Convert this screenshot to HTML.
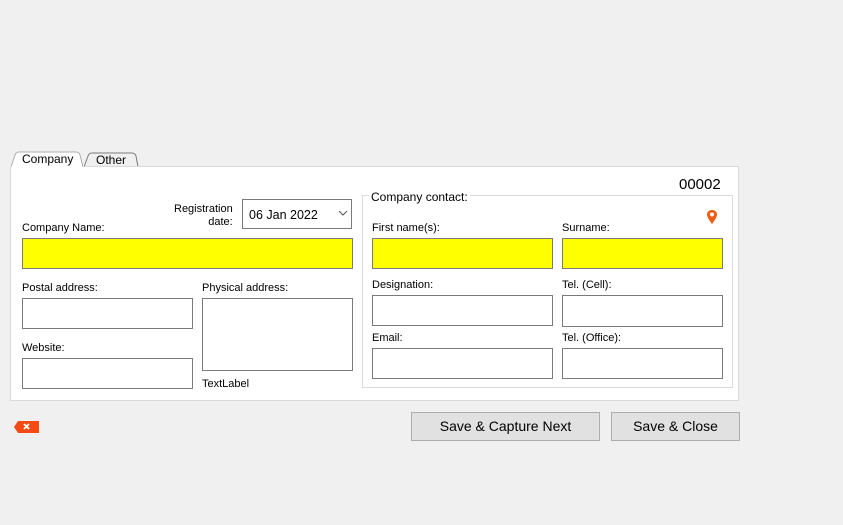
<!DOCTYPE html>
<html><head><meta charset="utf-8"><style>
body{margin:0;width:843px;height:525px;background:#f0f0f0;font-family:"Liberation Sans",sans-serif;color:#000;position:relative;overflow:hidden}
.a{position:absolute}
.l{position:absolute;font-size:11px;white-space:nowrap;margin-top:1px}
.i{position:absolute;background:#fff;border:1px solid #7a7a7a;box-sizing:border-box}
.y{background:#ffff00}
.b{position:absolute;background:#e1e1e1;border:1px solid #adadad;box-sizing:border-box;font-size:14px;text-align:center;line-height:26px}
</style></head><body>
<svg class="a" style="left:0;top:0" width="843" height="525">
<path d="M11 167 L15 155 Q16 152 19 152 L76 152 Q79 152 80 155 L83 167" fill="#fff" stroke="#adadad"/>
<path d="M84 167 L88 156 Q89 153 92 153 L132 153 Q135 153 136 156 L138 167" fill="#f0f0f0" stroke="#7a7a7a"/>
</svg>
<div class="a" style="left:10px;top:166px;width:729px;height:235px;background:#fff;border:1px solid #d9d9d9;box-sizing:border-box"></div>
<div class="a" style="left:12px;top:165px;width:70px;height:3px;background:#fff"></div>
<div class="a" style="left:22px;top:152px;font-size:12px">Company</div>
<div class="a" style="left:96px;top:153px;font-size:12px">Other</div>
<div class="a" style="left:679px;top:176px;font-size:15px">00002</div>
<div class="l" style="left:174px;top:202px;text-align:right;line-height:13px">Registration<br><span style="padding-left:19px">date:</span></div>
<div class="i" style="left:242px;top:199px;width:110px;height:30px;font-size:12.5px;padding:8px 0 0 6px">06 Jan 2022</div>
<svg class="a" style="left:338px;top:210px" width="10" height="6"><path d="M1 1 L5 5 L9 1" fill="none" stroke="#555"/></svg>
<div class="l" style="left:22px;top:221px">Company Name:</div>
<div class="i y" style="left:22px;top:238px;width:331px;height:31px"></div>
<div class="l" style="left:22px;top:281px">Postal address:</div>
<div class="i" style="left:22px;top:298px;width:171px;height:31px"></div>
<div class="l" style="left:202px;top:281px">Physical address:</div>
<div class="i" style="left:202px;top:298px;width:151px;height:73px"></div>
<div class="l" style="left:22px;top:341px">Website:</div>
<div class="i" style="left:22px;top:358px;width:171px;height:31px"></div>
<div class="l" style="left:202px;top:377px">TextLabel</div>
<div class="a" style="left:362px;top:195px;width:371px;height:193px;border:1px solid #dcdcdc;box-sizing:border-box"></div>
<div class="l" style="left:369px;top:189px;background:#fff;padding:0 2px;font-size:12px">Company contact:</div>
<svg class="a" style="left:706px;top:209px" width="12" height="17"><path d="M6 1 C2.5 1 1 3.5 1 5.5 C1 8.5 6 15 6 15 C6 15 11 8.5 11 5.5 C11 3.5 9.5 1 6 1 Z" fill="#f55a13"/><circle cx="6" cy="5.5" r="2" fill="#fff"/></svg>
<div class="l" style="left:372px;top:221px">First name(s):</div>
<div class="i y" style="left:372px;top:238px;width:181px;height:31px"></div>
<div class="l" style="left:562px;top:221px">Surname:</div>
<div class="i y" style="left:562px;top:238px;width:161px;height:31px"></div>
<div class="l" style="left:372px;top:278px">Designation:</div>
<div class="i" style="left:372px;top:295px;width:181px;height:31px"></div>
<div class="l" style="left:562px;top:278px">Tel. (Cell):</div>
<div class="i" style="left:562px;top:295px;width:161px;height:32px"></div>
<div class="l" style="left:372px;top:331px">Email:</div>
<div class="i" style="left:372px;top:348px;width:181px;height:31px"></div>
<div class="l" style="left:562px;top:331px">Tel. (Office):</div>
<div class="i" style="left:562px;top:348px;width:161px;height:31px"></div>
<svg class="a" style="left:14px;top:421px" width="25" height="12"><path d="M4 0 L25 0 L25 12 L4 12 L0 6 Z" fill="#f54a13"/><path d="M10 3 L15 8 M15 3 L10 8" stroke="#fff" stroke-width="1.8"/></svg>
<div class="b" style="left:411px;top:412px;width:189px;height:29px">Save &amp; Capture Next</div>
<div class="b" style="left:611px;top:412px;width:129px;height:29px">Save &amp; Close</div>
</body></html>
